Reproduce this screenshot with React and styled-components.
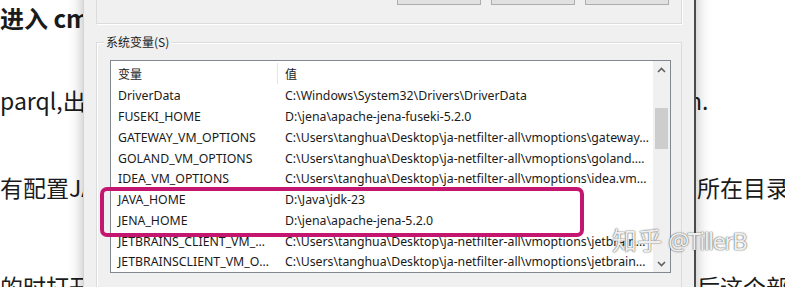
import React from "react";
import styled, { createGlobalStyle } from "styled-components";

const Global = createGlobalStyle`
  html, body { margin: 0; padding: 0; background: #fff; }
  body { width: 785px; height: 287px; overflow: hidden; position: relative; }
`;

const Page = styled.div`
  position: relative;
  width: 785px;
  height: 287px;
  overflow: hidden;
  background: #fff;
`;

const Article = styled.div`
  display: flex;
  flex-direction: column;
  font-family: "Noto Sans CJK SC", "Noto Sans", sans-serif;
  font-size: 23px;
  color: #1b1b1b;
`;

const Line = styled.div`
  display: grid;
  grid-template-columns: 697px 1fr;
  height: 32px;
  line-height: 32px;
  margin-top: ${(p) => p.$top}px;
  white-space: nowrap;
  overflow: hidden;
  font-weight: ${(p) => (p.$bold ? 700 : 400)};
  font-size: ${(p) => (p.$bold ? 24 : 23)}px;
`;

const Cell = styled.span`
  overflow: hidden;
  margin-left: ${(p) => p.$shift || 0}px;
`;

const Dialog = styled.div`
  position: absolute;
  left: 83px;
  top: -20px;
  width: 613px;
  height: 330px;
  background: #f0f0f0;
  border-left: 1px solid #d4d4d4;
  border-right: 2px solid #4a4a4a;
  box-shadow: 0 0 14px rgba(0, 0, 0, 0.28);
  padding: 0 12px 0 12px;
  box-sizing: border-box;
  display: flex;
  flex-direction: column;
  font-family: "Noto Sans", "Noto Sans CJK SC", sans-serif;
  font-size: 12.3px;
  color: #1a1a1a;
`;

const UpperGroup = styled.div`
  border: 1px solid #dcdcdc;
  border-top: none;
  box-shadow: 1px 1px 0 #fff;
  padding: 0 12px 18px 0;
  display: flex;
  justify-content: flex-end;
  gap: 10px;
`;

const Button = styled.div`
  width: 84px;
  height: 25px;
  box-sizing: border-box;
  background: #e1e1e1;
  border: 1px solid #adadad;
`;

const LowerGroup = styled.div`
  position: relative;
  margin-top: 18px;
  flex: 1;
  border: 1px solid #dcdcdc;
  border-bottom: none;
  box-shadow: inset 1px 1px 0 #fff;
  padding: 17px 10px 0 13px;
`;

const GroupLabel = styled.span`
  position: absolute;
  top: -9px;
  left: 7px;
  padding: 0 2px;
  background: #f0f0f0;
  font-family: "Noto Sans CJK SC", sans-serif;
  font-size: 12px;
  line-height: 16px;
  color: #1a1a1a;
`;

const ListBox = styled.div`
  position: relative;
  height: 213px;
  box-sizing: border-box;
  border: 1px solid #828790;
  background: #fff;
  display: flex;
`;

const Table = styled.div`
  flex: 1;
  min-width: 0;
  display: flex;
  flex-direction: column;
`;

const HeaderRow = styled.div`
  display: grid;
  grid-template-columns: 167px 1fr;
  height: 25px;
  flex-shrink: 0;
  font-family: "Noto Sans CJK SC", sans-serif;
  font-size: 12px;
`;

const HeaderCell = styled.div`
  padding-left: 7px;
  display: flex;
  align-items: center;
  margin: 2px 0;
  border-right: ${(p) => (p.$divider ? "1px solid #e5e5e5" : "none")};
`;

const Row = styled.div`
  display: grid;
  grid-template-columns: 167px 1fr;
  height: 20.75px;
  flex-shrink: 0;
  align-items: center;
`;

const Cellx = styled.div`
  padding-left: 7px;
  padding-right: ${(p) => (p.$last ? 3 : 5)}px;
  white-space: nowrap;
  overflow: hidden;
  text-overflow: ellipsis;
  line-height: 20px;
`;

const Scrollbar = styled.div`
  width: 17px;
  background: #f0f0f0;
  display: flex;
  flex-direction: column;
  align-items: center;
`;

const Arrow = styled.div`
  height: 17px;
  width: 17px;
  display: flex;
  align-items: center;
  justify-content: center;
`;

const Track = styled.div`
  flex: 1;
  width: 100%;
  display: flex;
  flex-direction: column;
  align-items: center;
`;

const Thumb = styled.div`
  margin-top: 30px;
  width: 13px;
  height: 41px;
  background: #cdcdcd;
`;

const Highlight = styled.div`
  position: absolute;
  left: -11px;
  top: 126px;
  width: 484px;
  height: 50px;
  box-sizing: border-box;
  border: 4px solid #c5166f;
  border-radius: 7px;
`;

const Watermark = styled.div`
  position: absolute;
  left: 612px;
  top: 221px;
  display: flex;
  align-items: baseline;
  gap: 6px;
  font-family: "Noto Sans CJK SC", "Noto Sans", sans-serif;
  font-size: 25px;
  line-height: 36px;
  color: rgba(255, 255, 255, 0.92);
  text-shadow: 0 0 1px rgba(70, 70, 70, 0.95), 0 0 2px rgba(70, 70, 70, 0.6);
  white-space: nowrap;
  z-index: 3;
`;

const MarkLatin = styled.span`
  font-family: "Noto Sans", sans-serif;
  font-size: 24px;
  letter-spacing: -1.8px;
`;

const Chevron = ({ down }) => (
  <svg width="9" height="6" viewBox="0 0 9 6">
    <polyline
      points={down ? "1,1 4.5,4.5 8,1" : "1,5 4.5,1.5 8,5"}
      fill="none"
      stroke="#606060"
      strokeWidth="1.6"
    />
  </svg>
);

const rows = [
  ["DriverData", "C:\\Windows\\System32\\Drivers\\DriverData"],
  ["FUSEKI_HOME", "D:\\jena\\apache-jena-fuseki-5.2.0"],
  ["GATEWAY_VM_OPTIONS", "C:\\Users\\tanghua\\Desktop\\ja-netfilter-all\\vmoptions\\gateway.vmoptions"],
  ["GOLAND_VM_OPTIONS", "C:\\Users\\tanghua\\Desktop\\ja-netfilter-all\\vmoptions\\goland.vmoptions"],
  ["IDEA_VM_OPTIONS", "C:\\Users\\tanghua\\Desktop\\ja-netfilter-all\\vmoptions\\idea.vmoptions"],
  ["JAVA_HOME", "D:\\Java\\jdk-23"],
  ["JENA_HOME", "D:\\jena\\apache-jena-5.2.0"],
  ["JETBRAINS_CLIENT_VM_OPTIONS", "C:\\Users\\tanghua\\Desktop\\ja-netfilter-all\\vmoptions\\jetbrain_client.vmoptions"],
  ["JETBRAINSCLIENT_VM_OPTIONS", "C:\\Users\\tanghua\\Desktop\\ja-netfilter-all\\vmoptions\\jetbrainsclient.vmoptions"],
];

export default function App() {
  return (
    <Page>
      <Global />
      <Article>
        <Line $top={2} $bold>
          <Cell>进入 cmd 目录</Cell>
          <Cell />
        </Line>
        <Line $top={50}>
          <Cell>parql,出现如下</Cell>
          <Cell $shift={-9}>n.</Cell>
        </Line>
        <Line $top={55}>
          <Cell>有配置JAVA_HOME</Cell>
          <Cell>所在目录</Cell>
        </Line>
        <Line $top={67}>
          <Cell>的时打开</Cell>
          <Cell>后这个部</Cell>
        </Line>
      </Article>
      <Dialog>
        <UpperGroup>
          <Button />
          <Button />
          <Button />
        </UpperGroup>
        <LowerGroup>
          <GroupLabel>系统变量(S)</GroupLabel>
          <ListBox>
            <Table>
              <HeaderRow>
                <HeaderCell $divider>变量</HeaderCell>
                <HeaderCell>值</HeaderCell>
              </HeaderRow>
              {rows.map(([k, v]) => (
                <Row key={k}>
                  <Cellx>{k}</Cellx>
                  <Cellx $last>{v}</Cellx>
                </Row>
              ))}
            </Table>
            <Scrollbar>
              <Arrow>
                <Chevron />
              </Arrow>
              <Track>
                <Thumb />
              </Track>
              <Arrow>
                <Chevron down />
              </Arrow>
            </Scrollbar>
            <Highlight />
          </ListBox>
        </LowerGroup>
      </Dialog>
      <Watermark>
        <span>知乎</span>
        <MarkLatin>@TillerB</MarkLatin>
      </Watermark>
    </Page>
  );
}
